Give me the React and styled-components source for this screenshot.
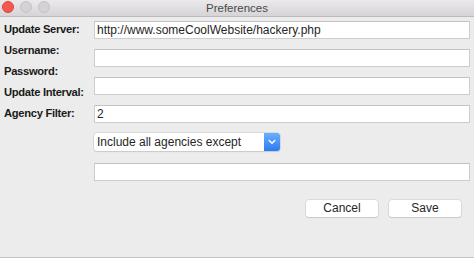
import React from 'react'
import styled, { createGlobalStyle } from 'styled-components'

const GlobalStyle = createGlobalStyle`
  html, body {
    margin: 0;
    padding: 0;
    background: #ececec;
  }
  body {
    font-family: "Liberation Sans", Arial, sans-serif;
  }
`

const Window = styled.div`
  width: 474px;
  height: 257px;
  background: #ececec;
  border-bottom: 1px solid #c4c4c4;
  overflow: hidden;
`

const TitleBar = styled.div`
  display: grid;
  grid-template-columns: 1fr auto 1fr;
  align-items: center;
  height: 16px;
  background: linear-gradient(#ebe9eb, #d6d4d6);
  border-bottom: 1px solid #bcbabc;
`

const Lights = styled.div`
  display: flex;
  gap: 6px;
  padding-left: 2px;
  margin-top: -2px;
`

const Light = styled.span`
  width: 12px;
  height: 12px;
  box-sizing: border-box;
  border-radius: 50%;
  background: ${p => p.$red ? '#f6584f' : '#d4d2d4'};
  border: 0.5px solid ${p => p.$red ? '#dd4640' : '#c4c2c4'};
`

const Title = styled.div`
  font-size: 11.5px;
  color: #4a4a4a;
  line-height: 16px;
`

const Body = styled.div`
  display: grid;
  grid-template-columns: 90px 376px;
  padding: 0 4px;
`

const Labels = styled.div`
  display: flex;
  flex-direction: column;
  padding-top: 2px;
`

const Label = styled.div`
  font-size: 11.2px;
  font-weight: bold;
  letter-spacing: -0.3px;
  color: #1a1a1a;
  line-height: 21px;
`

const Fields = styled.div`
  display: flex;
  flex-direction: column;
  gap: 10px;
  padding-top: 4px;
`

const Input = styled.div`
  height: 18px;
  box-sizing: border-box;
  background: #fff;
  border: 1px solid #cdcdcd;
  border-top-color: #c2c2c2;
  font-size: 12px;
  color: #262626;
  line-height: 16px;
  padding-left: 2px;
  margin-top: ${p => p.$gapTop || 0}px;
`

const Select = styled.div`
  display: flex;
  width: 186px;
  height: 18px;
  box-sizing: border-box;
  background: #fff;
  border-radius: 3px;
  box-shadow: 0 0 0 0.5px #c6c6c6, 0 1px 1px rgba(0, 0, 0, 0.12);
`

const SelectText = styled.div`
  flex: 1;
  font-size: 12px;
  color: #262626;
  line-height: 18px;
  padding-left: 3px;
`

const SelectArrow = styled.div`
  display: flex;
  align-items: center;
  justify-content: center;
  width: 16px;
  border-radius: 0 3px 3px 0;
  background: linear-gradient(#6aaefb, #2b7cf3);
`

const ButtonRow = styled.div`
  display: flex;
  justify-content: flex-end;
  gap: 11px;
  padding-right: 9px;
  margin-top: 9px;
`

const Button = styled.div`
  width: 72px;
  height: 17px;
  box-sizing: border-box;
  background: #fff;
  border-radius: 3px;
  box-shadow: 0 0 0 0.5px #c8c8c8, 0 1px 1px rgba(0, 0, 0, 0.14);
  font-size: 12px;
  color: #262626;
  line-height: 17px;
  text-align: center;
`

const Chevron = () => (
  <svg width="8" height="6" viewBox="0 0 8 6">
    <path d="M1.2 1.5 L4 4.3 L6.8 1.5" fill="none" stroke="#fff" strokeWidth="1.4" strokeLinecap="round" strokeLinejoin="round" />
  </svg>
)

export default function App() {
  return (
    <>
      <GlobalStyle />
      <Window>
        <TitleBar>
          <Lights>
            <Light $red />
            <Light />
            <Light />
          </Lights>
          <Title>Preferences</Title>
          <div />
        </TitleBar>
        <Body>
          <Labels>
            <Label>Update Server:</Label>
            <Label>Username:</Label>
            <Label>Password:</Label>
            <Label>Update Interval:</Label>
            <Label>Agency Filter:</Label>
          </Labels>
          <Fields>
            <Input>http://www.someCoolWebsite/hackery.php</Input>
            <Input />
            <Input />
            <Input>2</Input>
            <Select>
              <SelectText>Include all agencies except</SelectText>
              <SelectArrow><Chevron /></SelectArrow>
            </Select>
            <Input $gapTop={2} />
            <ButtonRow>
              <Button>Cancel</Button>
              <Button>Save</Button>
            </ButtonRow>
          </Fields>
        </Body>
      </Window>
    </>
  )
}
